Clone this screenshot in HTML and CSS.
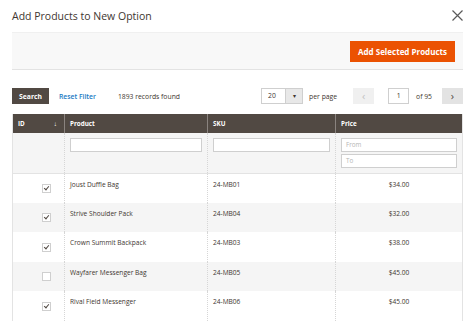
FILE: index.html
```html
<!DOCTYPE html>
<html lang="en">

<head>
    <title>Add Products to New Option</title>
    <meta charset="utf-8">
    <meta name="viewport" content="width=device-width, initial-scale=1">
    <link rel="stylesheet" href="styles.css">
</head>

<body>
    <div class="modal-header">
        <h1>Add Products to New Option</h1>
        <button class="close" aria-label="Close">
            <svg width="11" height="11" viewBox="0 0 11 11">
                <path d="M0.5 0.5 L10.5 10.5 M10.5 0.5 L0.5 10.5" stroke="#5a5a5a" stroke-width="1.2" fill="none" />
            </svg>
        </button>
    </div>

    <div class="page-actions">
        <button class="primary">Add Selected Products</button>
    </div>

    <div class="grid-controls">
        <div class="left">
            <button class="search">Search</button>
            <a class="reset" href="#">Reset Filter</a>
            <span class="found">1893 records found</span>
        </div>
        <div class="right">
            <div class="per-page">
                <span class="value">20</span>
                <span class="arrow">&#9662;</span>
            </div>
            <span class="label">per page</span>
            <button class="pager prev">&lsaquo;</button>
            <span class="page-input">1</span>
            <span class="label of">of 95</span>
            <button class="pager next">&rsaquo;</button>
        </div>
    </div>

    <table class="grid">
        <colgroup>
            <col class="c-id">
            <col class="c-product">
            <col class="c-sku">
            <col class="c-price">
        </colgroup>
        <thead>
            <tr>
                <th>ID <span class="sort">&#8595;</span></th>
                <th>Product</th>
                <th>SKU</th>
                <th>Price</th>
            </tr>
        </thead>
        <tbody>
            <tr class="filters">
                <td></td>
                <td><span class="input"></span></td>
                <td><span class="input"></span></td>
                <td>
                    <span class="input hint">From</span>
                    <span class="input hint">To</span>
                </td>
            </tr>
            <tr>
                <td class="check"><span class="box on"></span></td>
                <td>Joust Duffle Bag</td>
                <td>24-MB01</td>
                <td class="price">$34.00</td>
            </tr>
            <tr>
                <td class="check"><span class="box on"></span></td>
                <td>Strive Shoulder Pack</td>
                <td>24-MB04</td>
                <td class="price">$32.00</td>
            </tr>
            <tr>
                <td class="check"><span class="box on"></span></td>
                <td>Crown Summit Backpack</td>
                <td>24-MB03</td>
                <td class="price">$38.00</td>
            </tr>
            <tr>
                <td class="check"><span class="box"></span></td>
                <td>Wayfarer Messenger Bag</td>
                <td>24-MB05</td>
                <td class="price">$45.00</td>
            </tr>
            <tr>
                <td class="check"><span class="box on"></span></td>
                <td>Rival Field Messenger</td>
                <td>24-MB06</td>
                <td class="price">$45.00</td>
            </tr>
        </tbody>
    </table>
</body>

</html>
```

FILE: styles.css
```css
* {
    margin: 0;
    padding: 0;
    box-sizing: border-box;
}

body {
    background-color: #fff;
    color: #41362f;
    font-family: "Open Sans", Arial, sans-serif;
    font-size: 6.8px;
    padding: 0 11px 0 12px;
    overflow: hidden;
}

button {
    font-family: inherit;
    border: none;
    cursor: pointer;
}

/* Header */
.modal-header {
    display: flex;
    justify-content: space-between;
    align-items: flex-start;
    height: 32px;
    padding-top: 8px;
}

.modal-header h1 {
    font-size: 10.5px;
    font-weight: 400;
    color: #41362f;
    line-height: 16px;
}

.close {
    background: none;
    width: 11px;
    height: 11px;
    margin-top: 2px;
}

.close svg {
    display: block;
}

/* Toolbar */
.page-actions {
    display: flex;
    justify-content: flex-end;
    align-items: center;
    height: 38px;
    padding-right: 8px;
    background-color: #f8f8f8;
    border-top: 1px solid #f0f0f0;
    border-bottom: 1px solid #e3e3e3;
}

.primary {
    background-color: #eb5202;
    color: #fff;
    font-weight: 700;
    font-size: 8px;
    height: 21px;
    width: 105px;
}

/* Grid controls */
.grid-controls {
    display: flex;
    justify-content: space-between;
    align-items: center;
    margin-top: 18px;
    height: 16px;
}

.left,
.right {
    display: flex;
    align-items: center;
}

.search {
    background-color: #514943;
    color: #fff;
    font-weight: 700;
    font-size: 6.8px;
    width: 37px;
    height: 16px;
}

.reset {
    color: #1979c3;
    font-weight: 600;
    text-decoration: none;
    margin-left: 10px;
}

.found {
    margin-left: 22px;
}

.per-page {
    display: flex;
    width: 42px;
    height: 16px;
    border: 1px solid #cfcfcf;
    background: #fff;
}

.per-page .value {
    flex: 1;
    padding-left: 6px;
    line-height: 14px;
}

.per-page .arrow {
    width: 17px;
    background-color: #e8e8e8;
    border-left: 1px solid #cfcfcf;
    text-align: center;
    font-size: 6px;
    line-height: 14px;
}

.label {
    margin-left: 6px;
}

.pager {
    width: 21px;
    height: 16px;
    font-size: 11px;
    line-height: 14px;
}

.prev {
    background-color: #f0f0f0;
    color: #c2c2c2;
    margin-left: 16px;
}

.next {
    background-color: #e3e3e3;
    color: #514943;
    margin-left: 10px;
}

.page-input {
    width: 21px;
    height: 16px;
    margin-left: 14px;
    border: 1px solid #cfcfcf;
    text-align: center;
    line-height: 14px;
}

.of {
    margin-left: 7px;
}

/* Grid */
.grid {
    width: 100%;
    margin-top: 10px;
    border-collapse: collapse;
    table-layout: fixed;
    border-left: 1px solid #e3e3e3;
    border-right: 1px solid #e3e3e3;
}

.c-id {
    width: 52px;
}

.c-product {
    width: 143px;
}

.c-sku {
    width: 128px;
}

.grid th {
    background-color: #514943;
    color: #fff;
    font-weight: 700;
    font-size: 6.3px;
    text-align: left;
    height: 19px;
    padding: 0 5px;
    border-left: 1px solid #8a837f;
}

.grid th:first-child {
    border-left: none;
}

.sort {
    float: right;
    font-weight: 400;
    margin-right: 2px;
}

.grid td {
    height: 29.5px;
    padding: 6px 5px 0;
    line-height: 10px;
    font-size: 6.6px;
    vertical-align: top;
    border-left: 1px dotted #d6d6d6;
}

.grid td:first-child {
    border-left: none;
}

.grid tbody tr:nth-child(odd) {
    background-color: #f5f5f5;
}

.grid tr.filters {
    background-color: #f8f8f8;
    border-bottom: 1px solid #e3e3e3;
}

.grid tr.filters td {
    height: 40px;
    padding: 5px 5px 0;
}

.input {
    display: block;
    height: 14px;
    background: #fff;
    border: 1px solid #cfcfcf;
    color: #b5b5b5;
    padding-left: 4px;
    line-height: 12px;
    font-size: 6.3px;
}

.input + .input {
    margin-top: 2px;
}

.grid td.check {
    vertical-align: middle;
    padding: 0 0 0 29px;
}

.box {
    display: block;
    width: 9px;
    height: 9px;
    border: 1px solid #cfcfcf;
    background: #fff;
    position: relative;
    margin-top: 1px;
}

.box.on::after {
    content: "";
    position: absolute;
    left: 2px;
    top: 0px;
    width: 2px;
    height: 4px;
    border: solid #514943;
    border-width: 0 1.2px 1.2px 0;
    transform: rotate(40deg);
}

.price {
    text-align: center;
}
```
